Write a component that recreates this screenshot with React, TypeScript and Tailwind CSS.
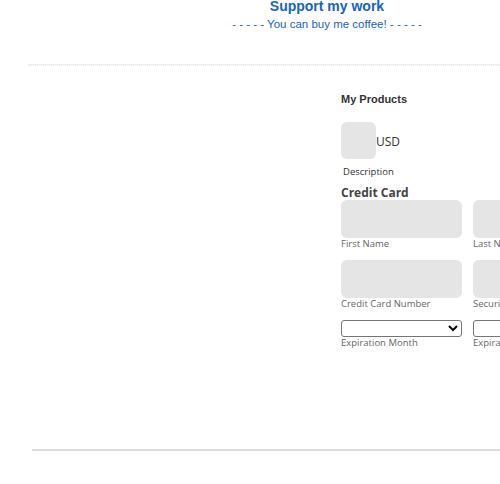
import React from "react";

const Field = ({label}: {label: string}) => (
    <div className="flex flex-col">
        <div className="h-[38px] w-[121px] rounded-[6px] bg-[#e5e5e5]"/>
        <span className="text-[9.5px] leading-[12px] text-[#666] font-['Open_Sans',sans-serif]">{label}</span>
    </div>
);

const SelectField = ({label}: {label: string}) => (
    <div className="flex flex-col">
        <select className="h-[17px] w-[121px] rounded-[3px] border border-[#767676] bg-white text-[10px]">
            <option></option>
        </select>
        <span className="text-[9.5px] leading-[12px] text-[#666] font-['Open_Sans',sans-serif]">{label}</span>
    </div>
);

export default function App() {
    return (
        <div className="w-[500px] h-[484px] overflow-hidden bg-white">
            <div className="w-[654px]">
                <header className="flex flex-col items-center font-['Liberation_Sans',Arial,sans-serif] text-[#1565c0]">
                    <h1 className="text-[14px] leading-[13px] font-bold">Support my work</h1>
                    <p className="mt-[4px] text-[11.5px] leading-[14px]">- - - - - You can buy me coffee! - - - - -</p>
                </header>

                <div className="mx-[28px] mt-[33px] border-t border-[#eeeeee]"/>
                <div className="mx-[28px] border-t border-dotted border-[#e6e6e6]"/>

                <main className="flex h-[383px]">
                    <div className="w-[341px]"/>
                    <div className="flex flex-col pt-[26px]">
                        <h2 className="text-[11px] leading-[14px] font-bold text-[#333] font-['Liberation_Sans',Arial,sans-serif]">My Products</h2>
                        <div className="mt-[16px] flex items-center">
                            <div className="h-[37px] w-[35px] rounded-[6px] bg-[#e5e5e5]"/>
                            <span className="mt-[2px] text-[12px] text-[#333] font-['Open_Sans',sans-serif]">USD</span>
                        </div>
                        <span className="mt-[6px] ml-[2px] text-[9.5px] leading-[14px] text-[#333] font-['Open_Sans',sans-serif]">Description</span>
                        <h3 className="mt-[7px] text-[12px] leading-[14px] font-bold text-[#444] font-['Open_Sans',sans-serif]">Credit Card</h3>
                        <div className="grid grid-cols-2 gap-x-[11px] gap-y-[10px] w-[253px]">
                            <Field label="First Name"/>
                            <Field label="Last Name"/>
                            <Field label="Credit Card Number"/>
                            <Field label="Security Code"/>
                            <SelectField label="Expiration Month"/>
                            <SelectField label="Expiration Year"/>
                        </div>
                    </div>
                </main>

                <div className="mx-[32px] border-t-2 border-[#dddddd]"/>
            </div>
        </div>
    );
}
